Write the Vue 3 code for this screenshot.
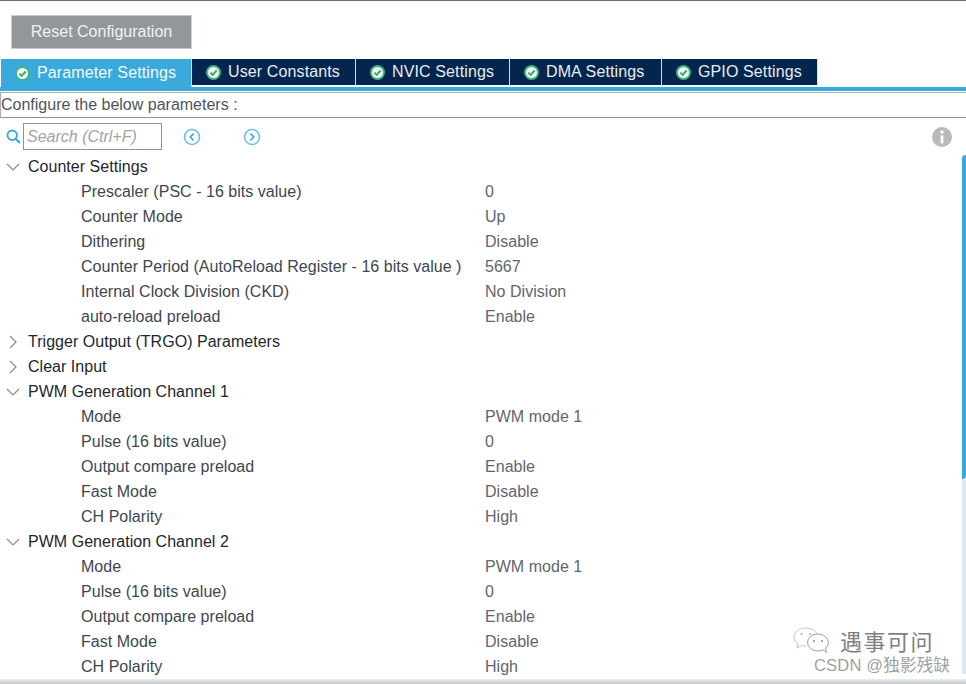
<script setup>
const tabs = [
  { label: 'Parameter Settings', active: true, width: 191 },
  { label: 'User Constants', width: 164 },
  { label: 'NVIC Settings', width: 154 },
  { label: 'DMA Settings', width: 152 },
  { label: 'GPIO Settings', width: 156 },
]
const rows = [
  { t: 'open', label: 'Counter Settings' },
  { label: 'Prescaler (PSC - 16 bits value)', value: '0' },
  { label: 'Counter Mode', value: 'Up' },
  { label: 'Dithering', value: 'Disable' },
  { label: 'Counter Period (AutoReload Register - 16 bits value )', value: '5667' },
  { label: 'Internal Clock Division (CKD)', value: 'No Division' },
  { label: 'auto-reload preload', value: 'Enable' },
  { t: 'closed', label: 'Trigger Output (TRGO) Parameters' },
  { t: 'closed', label: 'Clear Input' },
  { t: 'open', label: 'PWM Generation Channel 1' },
  { label: 'Mode', value: 'PWM mode 1' },
  { label: 'Pulse (16 bits value)', value: '0' },
  { label: 'Output compare preload', value: 'Enable' },
  { label: 'Fast Mode', value: 'Disable' },
  { label: 'CH Polarity', value: 'High' },
  { t: 'open', label: 'PWM Generation Channel 2' },
  { label: 'Mode', value: 'PWM mode 1' },
  { label: 'Pulse (16 bits value)', value: '0' },
  { label: 'Output compare preload', value: 'Enable' },
  { label: 'Fast Mode', value: 'Disable' },
  { label: 'CH Polarity', value: 'High' },
]
</script>

<template>
  <div class="page">
    <div class="toolbar">
      <button class="reset">Reset Configuration</button>
    </div>
    <div class="tabs">
      <div v-for="tab in tabs" :key="tab.label" class="tab" :class="{ active: tab.active }" :style="{ width: tab.width + 'px' }">
        <svg class="check" viewBox="0 0 14 14">
          <circle cx="7" cy="7" r="7" fill="#3fb27f" />
          <circle cx="7" cy="7" r="5.200" fill="#eef9f3" />
          <path d="M4.100 7.100 6.200 9.200 10 5.100" fill="none" stroke="#3fa877" stroke-width="1.900" />
        </svg>
        <span>{{ tab.label }}</span>
      </div>
    </div>
    <div class="configure">Configure the below parameters :</div>
    <div class="searchbar">
      <svg class="mag" viewBox="0 0 14 14">
        <circle cx="5.800" cy="5.800" r="4.400" fill="none" stroke="#39a9dc" stroke-width="1.800" />
        <path d="M9 9 13 13" stroke="#39a9dc" stroke-width="2" />
      </svg>
      <div class="search">Search (Ctrl+F)</div>
      <svg class="nav first" viewBox="0 0 18 18">
        <circle cx="9" cy="9" r="7.500" fill="none" stroke="#6cc0e6" stroke-width="1.600" />
        <path d="M10.600 5.600 7.200 9l3.400 3.400" fill="none" stroke="#39a9dc" stroke-width="1.600" />
      </svg>
      <svg class="nav second" viewBox="0 0 18 18">
        <circle cx="9" cy="9" r="7.500" fill="none" stroke="#6cc0e6" stroke-width="1.600" />
        <path d="M7.400 5.600 10.800 9l-3.400 3.400" fill="none" stroke="#39a9dc" stroke-width="1.600" />
      </svg>
      <svg class="info" viewBox="0 0 20 20">
        <circle cx="10" cy="10" r="10" fill="#b9b9b9" />
        <circle cx="10" cy="5" r="1.800" fill="#fff" />
        <rect x="8.600" y="8.400" width="2.800" height="8" fill="#fff" />
      </svg>
    </div>
    <div class="body">
      <div class="tree">
        <div v-for="(row, i) in rows" :key="i" class="row" :class="{ group: row.t }">
          <svg v-if="row.t" class="chev" viewBox="0 0 14 14">
            <path v-if="row.t === 'open'" d="M1 4 7 10 13 4" fill="none" stroke="#8a8a8a" stroke-width="1.200" />
            <path v-else d="M4 1 10 7 4 13" fill="none" stroke="#8a8a8a" stroke-width="1.200" />
          </svg>
          <span class="label">{{ row.label }}</span>
          <span v-if="row.value" class="value">{{ row.value }}</span>
        </div>
      </div>
      <div class="track"><div class="thumb"></div></div>
      <div class="watermark">
        <div class="wm-top">
          <svg class="wechat" viewBox="0 0 40 26">
            <path d="M13 1C6.500 1 1 5 1 10c0 2.800 1.600 5.200 4 7l-1 4 4.500-2.500c1.500.5 3 .7 4.500.7" fill="none" stroke="#c4c4c4" stroke-width="1" />
            <path d="M13 1c5.500 0 10 3 11.500 7" fill="none" stroke="#c4c4c4" stroke-width="1" />
            <ellipse cx="25" cy="15.500" rx="10.500" ry="8.500" fill="#fff" stroke="#a0a0a0" stroke-width="1" />
            <path d="M30 22.500 33.500 25.500 32.500 20.500" fill="#fff" stroke="#a0a0a0" stroke-width="1" />
            <circle cx="8.500" cy="7" r="1.100" fill="#b0b0b0" /><circle cx="17" cy="7" r="1.100" fill="#b0b0b0" />
            <circle cx="21" cy="14" r="1.100" fill="#909090" /><circle cx="29" cy="14" r="1.100" fill="#909090" />
          </svg>
          <span>遇事可问</span>
        </div>
        <div class="wm-bottom">CSDN @独影残缺</div>
      </div>
    </div>
    <div class="bottom"></div>
  </div>
</template>

<style>
html, body { margin: 0; background: #fff; }
</style>

<style scoped>
.page {
  width: 966px;
  height: 684px;
  overflow: hidden;
  display: flex;
  flex-direction: column;
  font-family: "Liberation Sans", Arial, sans-serif;
  background: #fff;
  border-top: 1px solid #6e6e6e;
  box-sizing: border-box;
}
.toolbar { height: 58px; padding: 14px 0 0 11px; box-sizing: border-box; }
.reset {
  width: 181px;
  height: 34px;
  border: 1px solid #c9ccd0;
  background: #92979c;
  color: #f1f1f1;
  font: 16px "Liberation Sans", Arial, sans-serif;
  padding: 0;
}
.tabs {
  display: flex;
  height: 28px;
  padding-left: 1px;
  border-bottom: 4px solid #3aa9dc;
  box-sizing: content-box;
}
.tab {
  box-sizing: border-box;
  display: flex;
  align-items: center;
  gap: 7px;
  padding: 0 0 0 14px;
  height: 26px;
  background: #04264e;
  color: #e8edf2;
  font-size: 16px;
  letter-spacing: 0.12px;
  white-space: nowrap;
  border-right: 1px solid #d5dbe0;
}
.tab.active {
  background: #3aa9dc;
  height: 28px;
  color: #f4fbff;
}
.check { width: 15px; height: 15px; flex: none; }
.configure {
  box-sizing: border-box;
  height: 26px;
  border-top: 1px solid #a9adb1;
  border-bottom: 1px solid #8f9498;
  border-left: 1px solid #a9adb1;
  color: #4d5560;
  font-size: 16px;
  line-height: 24px;
  margin-top: 1px;
  white-space: nowrap;
}
.searchbar {
  position: relative;
  height: 37px;
  display: flex;
  align-items: center;
  padding-left: 6px;
}
.mag { width: 15px; height: 15px; flex: none; margin-right: 2px; }
.search {
  box-sizing: border-box;
  width: 139px;
  height: 27px;
  border: 1px solid #8f9498;
  color: #a3a3a3;
  font-size: 16px;
  font-style: italic;
  line-height: 25px;
  padding-left: 3px;
}
.nav { width: 18px; height: 18px; flex: none; }
.first { margin-left: 21px; }
.second { margin-left: 42px; }
.info { position: absolute; width: 20px; height: 20px; left: 932px; top: 9px; }
.body { position: relative; flex: 1; min-height: 0; }
.tree { margin-top: -1px; }
.row {
  display: flex;
  align-items: center;
  height: 25px;
  color: #3e4650;
  font-size: 16px;
  letter-spacing: 0.03px;
  white-space: nowrap;
}
.row .label { width: 404px; margin-left: 81px; flex: none; }
.row .value { color: #5f666e; }
.row.group { color: #1e2630; }
.row.group .label { margin-left: 8px; width: auto; }
.chev { width: 14px; height: 14px; margin-left: 6px; flex: none; }
.track {
  position: absolute;
  right: 0;
  top: 0;
  height: 519px;
  width: 4px;
  background: #dce9f6;
}
.thumb {
  height: 324px;
  background: #39a9dc;
  border-radius: 4px 0 4px 0;
}
.watermark {
  position: absolute;
  left: 793px;
  top: 472px;
}
.wm-top {
  display: flex;
  align-items: center;
  gap: 7px;
  height: 26px;
  font-family: "Noto Sans CJK SC", sans-serif;
  font-size: 22px;
  line-height: 22px;
  letter-spacing: 1.500px;
  color: #808080;
}
.wechat { width: 40px; height: 26px; }
.wm-bottom {
  margin: 3px 0 0 21px;
  font-family: "Liberation Sans", "Noto Sans CJK SC", sans-serif;
  font-size: 16.500px;
  letter-spacing: 0.200px;
  line-height: 18px;
  color: #a0a0a0;
}
.bottom {
  height: 5px;
  background: linear-gradient(#eceeef, #d5d9db 50%, #c4c9cc);
}
</style>
